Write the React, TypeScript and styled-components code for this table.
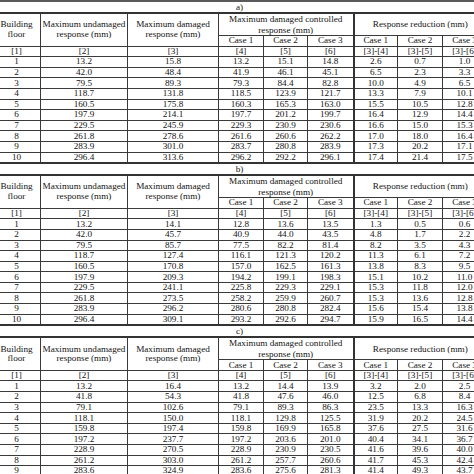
import React from 'react';
import styled, { createGlobalStyle } from 'styled-components';

const GlobalStyle = createGlobalStyle`
  html, body {
    margin: 0;
    padding: 0;
    background: #ffffff;
    overflow: hidden;
  }
`;

type Section = {
  label: string;
  undamaged: string[];
  damaged: string[];
  c1: string[];
  c2: string[];
  c3: string[];
  r1: string[];
  r2: string[];
  r3: string[];
};

const sections: Section[] = [
  {
    label: 'a)',
    undamaged: ['13.2', '42.0', '79.5', '118.7', '160.5', '197.9', '229.5', '261.8', '283.9', '296.4'],
    damaged: ['15.8', '48.4', '89.3', '131.8', '175.8', '214.1', '245.9', '278.6', '301.0', '313.6'],
    c1: ['13.2', '41.9', '79.3', '118.5', '160.3', '197.7', '229.3', '261.6', '283.7', '296.2'],
    c2: ['15.1', '46.1', '84.4', '123.9', '165.3', '201.2', '230.9', '260.6', '280.8', '292.2'],
    c3: ['14.8', '45.1', '82.8', '121.7', '163.0', '199.7', '230.6', '262.2', '283.9', '296.1'],
    r1: ['2.6', '6.5', '10.0', '13.3', '15.5', '16.4', '16.6', '17.0', '17.3', '17.4'],
    r2: ['0.7', '2.3', '4.9', '7.9', '10.5', '12.9', '15.0', '18.0', '20.2', '21.4'],
    r3: ['1.0', '3.3', '6.5', '10.1', '12.8', '14.4', '15.3', '16.4', '17.1', '17.5'],
  },
  {
    label: 'b)',
    undamaged: ['13.2', '42.0', '79.5', '118.7', '160.5', '197.9', '229.5', '261.8', '283.9', '296.4'],
    damaged: ['14.1', '45.7', '85.7', '127.4', '170.8', '209.3', '241.1', '273.5', '296.2', '309.1'],
    c1: ['12.8', '40.9', '77.5', '116.1', '157.0', '194.2', '225.8', '258.2', '280.6', '293.2'],
    c2: ['13.6', '44.0', '82.2', '121.3', '162.5', '199.1', '229.3', '259.9', '280.8', '292.6'],
    c3: ['13.5', '43.5', '81.4', '120.2', '161.3', '198.3', '229.1', '260.7', '282.4', '294.7'],
    r1: ['1.3', '4.8', '8.2', '11.3', '13.8', '15.1', '15.3', '15.3', '15.6', '15.9'],
    r2: ['0.5', '1.7', '3.5', '6.1', '8.3', '10.2', '11.8', '13.6', '15.4', '16.5'],
    r3: ['0.6', '2.2', '4.3', '7.2', '9.5', '11.0', '12.0', '12.8', '13.8', '14.4'],
  },
  {
    label: 'c)',
    undamaged: ['13.2', '41.8', '79.1', '118.1', '159.8', '197.2', '228.9', '261.2', '283.6'],
    damaged: ['16.4', '54.3', '102.6', '150.0', '197.4', '237.7', '270.5', '303.0', '324.9'],
    c1: ['13.2', '41.8', '79.1', '118.1', '159.8', '197.2', '228.9', '261.2', '283.6'],
    c2: ['14.4', '47.6', '89.3', '129.8', '169.9', '203.6', '230.9', '257.7', '275.6'],
    c3: ['13.9', '46.0', '86.3', '125.5', '165.8', '201.0', '230.5', '260.6', '281.3'],
    r1: ['3.2', '12.5', '23.5', '31.9', '37.6', '40.4', '41.6', '41.7', '41.4'],
    r2: ['2.0', '6.8', '13.3', '20.2', '27.5', '34.1', '39.6', '45.3', '49.3'],
    r3: ['2.5', '8.4', '16.3', '24.5', '31.6', '36.7', '40.0', '42.4', '43.7'],
  },
];

const colWidths = [48, 87, 91, 45, 44, 46, 44, 45, 44];

const DataTable = ({ s }: { s: Section }) => (
  <Table>
    <colgroup>
      {colWidths.map((w, i) => (
        <col key={i} style={{ width: w }} />
      ))}
    </colgroup>
    <tbody>
      <tr>
        <Label colSpan={9}>{s.label}</Label>
      </tr>
      <tr>
        <Head rowSpan={2}>
          Building
          <br />
          floor
        </Head>
        <Head rowSpan={2}>
          Maximum undamaged
          <br />
          response (mm)
        </Head>
        <Head rowSpan={2}>
          Maximum damaged
          <br />
          response (mm)
        </Head>
        <Group colSpan={3} $split>
          Maximum damaged controlled
          <br />
          response (mm)
        </Group>
        <Group colSpan={3}>Response reduction (mm)</Group>
      </tr>
      <tr>
        <Cell>Case 1</Cell>
        <Cell>Case 2</Cell>
        <Cell $split>Case 3</Cell>
        <Cell>Case 1</Cell>
        <Cell>Case 2</Cell>
        <Cell>Case 3</Cell>
      </tr>
      <tr>
        <Cell>[1]</Cell>
        <Cell>[2]</Cell>
        <Cell>[3]</Cell>
        <Cell>[4]</Cell>
        <Cell>[5]</Cell>
        <Cell $split>[6]</Cell>
        <Cell>[3]-[4]</Cell>
        <Cell>[3]-[5]</Cell>
        <Cell>[3]-[6]</Cell>
      </tr>
      {s.undamaged.map((_, i) => {
        const last = i === s.undamaged.length - 1;
        return (
          <tr key={i}>
            <Cell $last={last}>{i + 1}</Cell>
            <Cell $last={last}>{s.undamaged[i]}</Cell>
            <Cell $last={last}>{s.damaged[i]}</Cell>
            <Cell $last={last}>{s.c1[i]}</Cell>
            <Cell $last={last}>{s.c2[i]}</Cell>
            <Cell $last={last} $split>{s.c3[i]}</Cell>
            <Cell $last={last}>{s.r1[i]}</Cell>
            <Cell $last={last}>{s.r2[i]}</Cell>
            <Cell $last={last}>{s.r3[i]}</Cell>
          </tr>
        );
      })}
    </tbody>
  </Table>
);

const App = () => {
  return (
    <Page>
      <GlobalStyle />
      <TopRule />
      {sections.map((s) => (
        <DataTable key={s.label} s={s} />
      ))}
    </Page>
  );
};

const Page = styled.div`
  width: 494px;
  margin-left: -8px;
  height: 474px;
  overflow: hidden;
  font-family: 'Liberation Serif', 'Times New Roman', serif;
  font-size: 9.2px;
  color: #141414;
`;
const TopRule = styled.div`
  height: 2px;
  background: #5a5a5a;
`;
const Table = styled.table`
  width: 494px;
  table-layout: fixed;
  border-collapse: collapse;
  border-spacing: 0;
`;
const Cell = styled.td<{ $split?: boolean; $last?: boolean }>`
  height: 9.6px;
  padding: 0;
  line-height: 9px;
  text-align: center;
  vertical-align: middle;
  border: 1px solid #3a3a3a;
  border-right: ${(p) => (p.$split ? '2px solid #333' : '1px solid #3a3a3a')};
  border-bottom: ${(p) => (p.$last ? '2px solid #333' : '1px solid #3a3a3a')};
  white-space: nowrap;
  overflow: hidden;
`;
const Head = styled.td`
  padding: 0;
  line-height: 9.5px;
  text-align: center;
  vertical-align: middle;
  border: 1px solid #3a3a3a;
  border-top: 2px solid #333;
  white-space: nowrap;
`;
const Group = styled.td<{ $split?: boolean }>`
  height: 19px;
  padding: 0;
  line-height: 10.5px;
  text-align: center;
  vertical-align: middle;
  border: 1px solid #3a3a3a;
  border-top: 2px solid #333;
  border-right: ${(p) => (p.$split ? '2px solid #333' : '1px solid #3a3a3a')};
  white-space: nowrap;
`;
const Label = styled.td`
  height: 10px;
  padding: 0;
  line-height: 10px;
  text-align: center;
  border: none;
`;

export default App;
